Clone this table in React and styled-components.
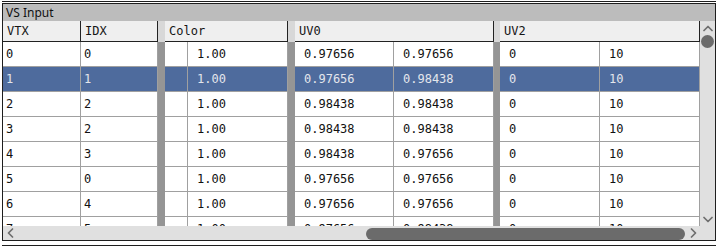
import React from "react";
import styled, { createGlobalStyle, css } from "styled-components";

const Global = createGlobalStyle`
  html, body { margin: 0; padding: 0; background: #ffffff; }
  body { font-family: "DejaVu Sans Mono", monospace; }
`;

const Page = styled.div`
  padding: 1px 0 0 2px;
  width: 714px;
`;

const PrevEdge = styled.div`
  height: 1px;
  background: #1e1e1e;
  margin-bottom: 1px;
`;

const Panel = styled.section`
  box-sizing: border-box;
  width: 714px;
  border: 1px solid #1e1e1e;
  background: #e0e0e0;
`;

const TitleBar = styled.div`
  height: 17px;
  line-height: 17px;
  padding-left: 3px;
  background: #bcbcbc;
  color: #111;
  font-family: "Noto Sans", "Open Sans", sans-serif;
  font-size: 12px;
`;

const Content = styled.div`
  display: grid;
  grid-template-columns: 697px 15px;
  grid-template-rows: 205px 14px;
`;

const Viewport = styled.div`
  overflow: hidden;
  background: #ffffff;
`;

const HEADER_COLS = "78px 77px 7px 123px 7px 199px 6px 200px";
const ROW_COLS = "78px 77px 7px 23px 100px 7px 99px 100px 6px 100px 100px";

const HeaderRow = styled.div`
  display: grid;
  grid-template-columns: ${HEADER_COLS};
  height: 21px;
`;

const HeaderCell = styled.div`
  box-sizing: border-box;
  background: #efefef;
  border-right: 1px solid #222;
  border-bottom: 1px solid #222;
  padding-left: 4px;
  line-height: 20px;
  font-size: 12px;
  color: #151515;
  white-space: pre;
`;

const HeaderGap = styled.div`
  background: #d8d8d8;
`;

const Row = styled.div`
  display: grid;
  grid-template-columns: ${ROW_COLS};
  height: 25px;
  background: ${(p) => (p.$selected ? "#4e6b9d" : "#ffffff")};
  color: ${(p) => (p.$selected ? "#e4e6ec" : "#111")};
`;

const Cell = styled.div`
  box-sizing: border-box;
  border-right: 1px solid #a0a0a0;
  border-bottom: 1px solid #a0a0a0;
  padding-left: ${(p) => (p.$value ? "9px" : "3px")};
  line-height: 24px;
  font-size: 12px;
  white-space: pre;
  overflow: hidden;
`;

const GroupGap = styled.div`
  background: #959595;
`;

const ScrollBase = css`
  background: #e0e0e0;
  display: flex;
`;

const VScroll = styled.div`
  ${ScrollBase};
  flex-direction: column;
  align-items: center;
`;

const HScroll = styled.div`
  ${ScrollBase};
  flex-direction: row;
  align-items: center;
`;

const Corner = styled.div`
  background: #e0e0e0;
`;

const ArrowBtn = styled.div`
  flex: 0 0 14px;
  width: ${(p) => (p.$horizontal ? "14px" : "15px")};
  height: 14px;
  display: flex;
  align-items: center;
  justify-content: center;
  ${(p) => p.$end && "margin-top: auto;"}
`;

const VTrack = styled.div`
  width: 15px;
  display: flex;
  justify-content: center;
`;

const VThumb = styled.div`
  width: 13px;
  height: 13px;
  border-radius: 6.5px;
  background: #6b6b6b;
`;

const HTrack = styled.div`
  flex: 1;
  height: 14px;
  display: flex;
  align-items: center;
`;

const HThumb = styled.div`
  height: 12px;
  border-radius: 6px;
  background: #6b6b6b;
  margin-top: 1px;
`;

const NextEdge = styled.div`
  margin-top: 4px;
  height: 3px;
  border-top: 1px solid #1e1e1e;
  background: #ffffff;
`;

const Chevron = ({ dir }) => {
  const pts = {
    up: "1,5.5 5,1.5 9,5.5",
    down: "1,1.5 5,5.5 9,1.5",
    left: "5.5,1 1.5,5 5.5,9",
    right: "1.5,1 5.5,5 1.5,9",
  }[dir];
  const vertical = dir === "up" || dir === "down";
  const w = vertical ? 10 : 7;
  const h = vertical ? 7 : 10;
  return (
    <svg width={w} height={h} viewBox={`0 0 ${w} ${h}`}>
      <polyline points={pts} fill="none" stroke="#6e6e6e" strokeWidth="1.7" strokeLinecap="round" strokeLinejoin="round" />
    </svg>
  );
};

const rows = [
  ["0", "0", "1.00", "0.97656", "0.97656", "0", "10"],
  ["1", "1", "1.00", "0.97656", "0.98438", "0", "10"],
  ["2", "2", "1.00", "0.98438", "0.98438", "0", "10"],
  ["3", "2", "1.00", "0.98438", "0.98438", "0", "10"],
  ["4", "3", "1.00", "0.98438", "0.97656", "0", "10"],
  ["5", "0", "1.00", "0.97656", "0.97656", "0", "10"],
  ["6", "4", "1.00", "0.97656", "0.97656", "0", "10"],
  ["7", "5", "1.00", "0.97656", "0.98438", "0", "10"],
];

const SELECTED = 1;
const H_TRACK = 668;
const H_CONTENT = 1466;
const H_SCROLL = 767;

export default function App() {
  const thumbW = Math.round((H_TRACK * 697) / H_CONTENT) + 1;
  const thumbX = Math.round((H_SCROLL / H_CONTENT) * H_TRACK);
  return (
    <>
      <Global />
      <Page>
        <PrevEdge />
        <Panel>
          <TitleBar>VS Input</TitleBar>
          <Content>
            <Viewport>
              <HeaderRow>
                <HeaderCell>VTX</HeaderCell>
                <HeaderCell>IDX</HeaderCell>
                <HeaderGap />
                <HeaderCell>Color</HeaderCell>
                <HeaderGap />
                <HeaderCell>UV0</HeaderCell>
                <HeaderGap />
                <HeaderCell>UV2</HeaderCell>
              </HeaderRow>
              {rows.map((r, i) => (
                <Row key={i} $selected={i === SELECTED}>
                  <Cell>{r[0]}</Cell>
                  <Cell>{r[1]}</Cell>
                  <GroupGap />
                  <Cell />
                  <Cell $value>{r[2]}</Cell>
                  <GroupGap />
                  <Cell $value>{r[3]}</Cell>
                  <Cell $value>{r[4]}</Cell>
                  <GroupGap />
                  <Cell $value>{r[5]}</Cell>
                  <Cell $value>{r[6]}</Cell>
                </Row>
              ))}
            </Viewport>
            <VScroll>
              <ArrowBtn>
                <Chevron dir="up" />
              </ArrowBtn>
              <VTrack>
                <VThumb />
              </VTrack>
              <ArrowBtn $end>
                <Chevron dir="down" />
              </ArrowBtn>
            </VScroll>
            <HScroll>
              <ArrowBtn $horizontal>
                <Chevron dir="left" />
              </ArrowBtn>
              <HTrack>
                <HThumb style={{ marginLeft: thumbX, width: thumbW }} />
              </HTrack>
              <ArrowBtn $horizontal>
                <Chevron dir="right" />
              </ArrowBtn>
            </HScroll>
            <Corner />
          </Content>
        </Panel>
        <NextEdge />
      </Page>
    </>
  );
}
